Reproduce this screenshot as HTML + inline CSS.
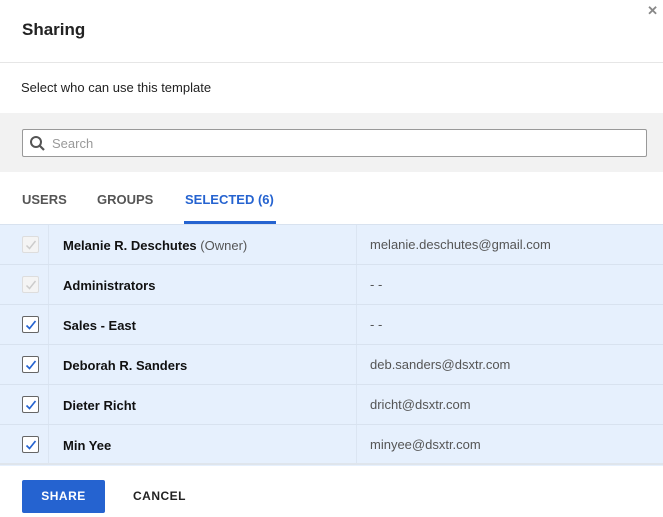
<!DOCTYPE html>
<html><head><style>
*{box-sizing:border-box;margin:0;padding:0}
body{width:663px;height:517px;background:#fff;font-family:"Liberation Sans",sans-serif;position:relative;overflow:hidden;color:#1a1a1a}
.abs{position:absolute}
.title{left:22px;top:20px;font-size:17px;font-weight:bold;color:#222}
.close{right:5px;top:3px;font-size:13px;color:#888;font-weight:bold}
.hr{left:0;top:62px;width:663px;height:1px;background:#e6e6e6}
.sub{left:21px;top:80px;font-size:13px;color:#222}
.band{left:0;top:113px;width:663px;height:59px;background:#f2f2f2}
.search{left:22px;top:129px;width:625px;height:28px;border:1px solid #999;background:#fff;border-radius:2px}
.search span{position:absolute;left:29px;top:6px;font-size:13px;color:#999}
.tab{top:192px;font-size:13px;font-weight:bold;color:#555}
.ul{left:184px;top:221px;width:92px;height:3px;background:#2563d0}
.rows{left:0;top:224px;width:663px;height:242px;background:#e6f0fd;border-top:1px solid #d8e2ef}
.row{position:relative;height:40px;border-bottom:1px solid #d8e2ef}
.row:last-child{border-bottom:2px solid #dfe5ec}
.c1{position:absolute;left:48px;top:0;width:1px;height:100%;background:#dbe5f2}
.c2{position:absolute;left:356px;top:0;width:1px;height:100%;background:#dbe5f2}
.cb{position:absolute;left:22px;top:11px;width:17px;height:17px;border:1px solid #666;border-radius:2px;background:#fff}
.cb.dis{border-color:#ddd;background:#f4f4f4}
.cb svg{position:absolute;left:2px;top:2px}
.name{position:absolute;left:63px;top:13px;font-size:13px;font-weight:bold;color:#111}
.name i{font-style:normal;font-weight:normal;color:#555}
.mail{position:absolute;left:370px;top:12px;font-size:13px;color:#555}
.btn{left:22px;top:480px;width:83px;height:33px;background:#2563d0;color:#fff;font-size:12px;font-weight:bold;text-align:center;line-height:33px;letter-spacing:.5px;border-radius:2px}
.cancel{left:133px;top:489px;font-size:12px;font-weight:bold;color:#222;letter-spacing:.5px}
</style></head><body>
<div class="abs title">Sharing</div>
<div class="abs close">✕</div>
<div class="abs hr"></div>
<div class="abs sub">Select who can use this template</div>
<div class="abs band"></div>
<div class="abs search"><svg class="abs" style="left:6px;top:5px" width="17" height="17" viewBox="0 0 17 17"><circle cx="7" cy="7" r="5" fill="none" stroke="#555" stroke-width="2"/><path d="M10.5 10.5L15 15" stroke="#555" stroke-width="2.2"/></svg><span>Search</span></div>
<div class="abs tab" style="left:22px">USERS</div>
<div class="abs tab" style="left:97px">GROUPS</div>
<div class="abs tab" style="left:185px;color:#2563d0">SELECTED (6)</div>
<div class="abs ul"></div>
<div class="abs rows">
<div class="row"><div class="c1"></div><div class="c2"></div><div class="cb dis"><svg width="12" height="12" viewBox="0 0 12 12"><path d="M1.5 6.5L4.5 9.5L10.5 2" fill="none" stroke="#ccc" stroke-width="1.5"/></svg></div><div class="name">Melanie R. Deschutes <i>(Owner)</i></div><div class="mail">melanie.deschutes@gmail.com</div></div>
<div class="row"><div class="c1"></div><div class="c2"></div><div class="cb dis"><svg width="12" height="12" viewBox="0 0 12 12"><path d="M1.5 6.5L4.5 9.5L10.5 2" fill="none" stroke="#ccc" stroke-width="1.5"/></svg></div><div class="name">Administrators</div><div class="mail">- -</div></div>
<div class="row"><div class="c1"></div><div class="c2"></div><div class="cb"><svg width="12" height="12" viewBox="0 0 12 12"><path d="M1.5 6.5L4.5 9.5L10.5 2" fill="none" stroke="#2563d0" stroke-width="1.7"/></svg></div><div class="name">Sales - East</div><div class="mail">- -</div></div>
<div class="row"><div class="c1"></div><div class="c2"></div><div class="cb"><svg width="12" height="12" viewBox="0 0 12 12"><path d="M1.5 6.5L4.5 9.5L10.5 2" fill="none" stroke="#2563d0" stroke-width="1.7"/></svg></div><div class="name">Deborah R. Sanders</div><div class="mail">deb.sanders@dsxtr.com</div></div>
<div class="row"><div class="c1"></div><div class="c2"></div><div class="cb"><svg width="12" height="12" viewBox="0 0 12 12"><path d="M1.5 6.5L4.5 9.5L10.5 2" fill="none" stroke="#2563d0" stroke-width="1.7"/></svg></div><div class="name">Dieter Richt</div><div class="mail">dricht@dsxtr.com</div></div>
<div class="row"><div class="c1"></div><div class="c2"></div><div class="cb"><svg width="12" height="12" viewBox="0 0 12 12"><path d="M1.5 6.5L4.5 9.5L10.5 2" fill="none" stroke="#2563d0" stroke-width="1.7"/></svg></div><div class="name">Min Yee</div><div class="mail">minyee@dsxtr.com</div></div>
</div>
<div class="abs btn">SHARE</div>
<div class="abs cancel">CANCEL</div>
</body></html>
